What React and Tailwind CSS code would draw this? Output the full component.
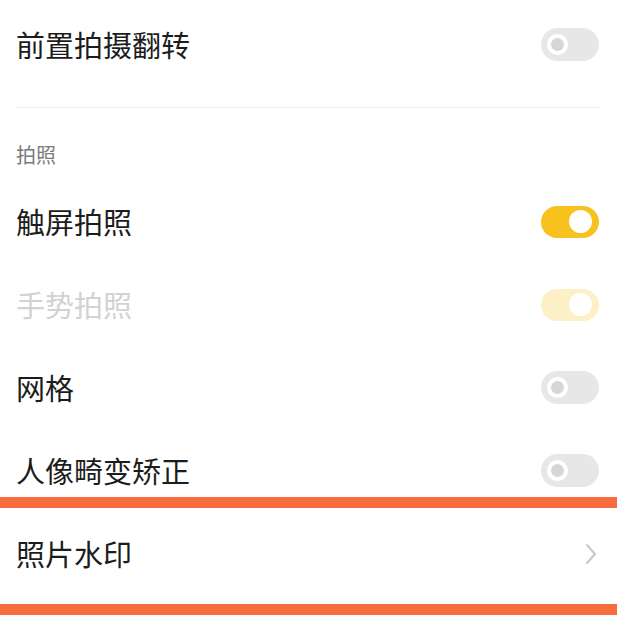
import React from "react";

const font = { fontFamily: '"Noto Sans CJK SC", "Noto Sans", sans-serif' };

function ToggleOn({ disabled }) {
  return (
    <div
      className={`w-[58px] h-[32px] rounded-full flex items-center justify-end pr-[7px] ${
        disabled ? "bg-[#fdf0c6]" : "bg-[#f7c21d]"
      }`}
    >
      <div className="w-[23px] h-[23px] rounded-full bg-white" />
    </div>
  );
}

function ToggleOff() {
  return (
    <div className="w-[58px] h-[33px] rounded-full bg-[#e7e7e7] flex items-center pl-[6px]">
      <div className="w-[21px] h-[21px] rounded-full border-[4px] border-white bg-[#d6d6d6]" />
    </div>
  );
}

function Row({ label, right, muted }) {
  return (
    <div className="h-[83px] flex items-center justify-between pl-[16px] pr-[18px]">
      <span
        className={`text-[29px] leading-none ${muted ? "text-[#d2d2d2]" : "text-[#1c1c1c]"}`}
      >
        {label}
      </span>
      {right}
    </div>
  );
}

export default function App() {
  return (
    <div className="relative w-[617px] h-[620px] bg-white overflow-hidden" style={font}>
      <div className="h-[88px] flex items-center justify-between pl-[16px] pr-[18px]">
        <span className="text-[29px] leading-none text-[#1c1c1c]">前置拍摄翻转</span>
        <ToggleOff />
      </div>
      <div className="mt-[19px] mx-[16px] h-px bg-[#ececec]" />
      <div className="h-[72px] pl-[16px] pt-[36px]">
        <span className="block text-[20px] leading-[22px] text-[#7a7a7a]">拍照</span>
      </div>
      <Row label="触屏拍照" right={<ToggleOn />} />
      <Row label="手势拍照" muted right={<ToggleOn disabled />} />
      <Row label="网格" right={<ToggleOff />} />
      <Row label="人像畸变矫正" right={<ToggleOff />} />
      <Row
        label="照片水印"
        right={
          <svg width="14" height="22" viewBox="0 0 14 22" className="mr-[1px]">
            <path d="M3 2 L11 11 L3 20" fill="none" stroke="#c6c6c6" strokeWidth="2" strokeLinecap="round" strokeLinejoin="round" />
          </svg>
        }
      />
      <div className="absolute left-0 right-0 top-[497px] h-[11px] bg-[#f86d3e]" />
      <div className="absolute left-0 right-0 top-[604px] h-[11px] bg-[#f86d3e]" />
    </div>
  );
}
